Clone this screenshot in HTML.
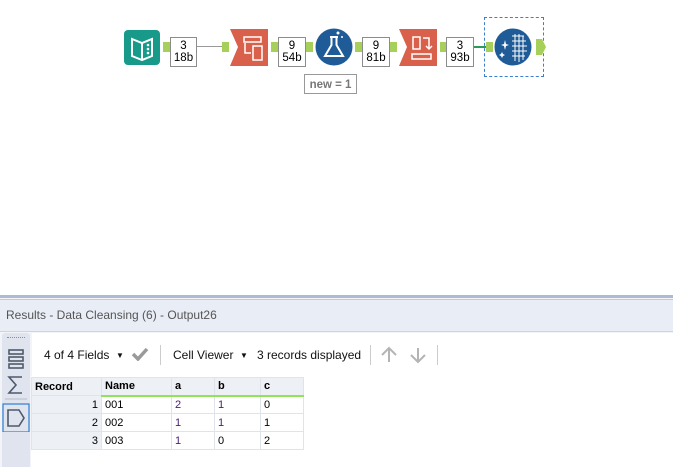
<!DOCTYPE html>
<html><head><style>
*{margin:0;padding:0;box-sizing:border-box}
body{width:673px;height:467px;overflow:hidden;background:#fff;font-family:"Liberation Sans",sans-serif;position:relative}
.a{position:absolute}
.box{position:absolute;background:#fff;border:1px solid #8c8c8c;font-size:11.5px;line-height:12px;text-align:center;color:#000;padding-top:2px}
.anc{position:absolute;width:7px;height:10px;background:#a6d05a}
.tb{position:absolute;font-size:12px;color:#111;top:348px}
table{border-collapse:collapse;font-size:11px}
td{border:1px solid #dfe3ea;height:18px;padding:0 3px}
td.p{color:#4a2070}
th{border:1px solid #dfe3ea;background:#edf0f5;height:18px;text-align:left;padding:0 3px;font-weight:bold}
th.g{border-bottom:2px solid #8fe35a}
td.r{background:#edf0f5;text-align:right}
</style></head><body>
<!-- workflow -->
<div class="a" style="left:124px;top:30px;width:36px;height:35px;background:#179a8a;border-radius:4px"></div>
<svg class="a" style="left:124px;top:30px" width="36" height="35"><path d="M8 9 L18 13 L28 9 L28 26 L18 30 L8 26Z M18 13 V30" fill="none" stroke="#fff" stroke-width="2"/><circle cx="24" cy="15" r="1.3" fill="#fff"/><circle cx="24" cy="19" r="1.3" fill="#fff"/><circle cx="24" cy="23" r="1.3" fill="#fff"/></svg>
<div class="anc" style="left:163px;top:42px"></div>
<div class="box" style="left:170px;top:37px;width:27px;height:30px">3<br>18b</div>
<div class="a" style="left:197px;top:46px;width:26px;height:1px;background:#999"></div>
<div class="anc" style="left:222px;top:42px"></div>
<svg class="a" style="left:230px;top:29px" width="40" height="37"><path d="M0 0H38V37H0L8 18Z" fill="#d9604a"/><rect x="14" y="8" width="17" height="5" fill="none" stroke="#fff" stroke-width="1.5"/><rect x="23" y="17" width="9" height="14" fill="none" stroke="#fff" stroke-width="1.5"/><path d="M15 14V24H21" fill="none" stroke="#fff" stroke-width="1.5"/></svg>
<div class="anc" style="left:271px;top:42px"></div>
<div class="box" style="left:278px;top:37px;width:28px;height:30px">9<br>54b</div>
<div class="anc" style="left:306px;top:42px"></div>
<svg class="a" style="left:315px;top:28px" width="38" height="38"><circle cx="19" cy="19" r="18.5" fill="#1e5b97"/><path d="M15 9H23M16.5 9V17L10 28H28L21.5 17V9" fill="none" stroke="#fff" stroke-width="2"/><circle cx="23" cy="5" r="1.5" fill="#fff"/><circle cx="27" cy="9" r="1" fill="#fff"/></svg>
<div class="box" style="left:304px;top:74px;width:53px;height:20px;color:#777;font-weight:bold;padding-top:4px;border-color:#999">new = 1</div>
<div class="anc" style="left:355px;top:42px"></div>
<div class="box" style="left:362px;top:37px;width:28px;height:30px">9<br>81b</div>
<div class="anc" style="left:390px;top:42px"></div>
<svg class="a" style="left:399px;top:29px" width="40" height="37"><path d="M0 0H38V37H0L8 18Z" fill="#d9604a"/><rect x="14" y="8" width="7" height="12" fill="none" stroke="#fff" stroke-width="1.5"/><rect x="13" y="25" width="19" height="5" fill="none" stroke="#fff" stroke-width="1.5"/><path d="M24 9H30V20M27 17L30 20L33 17" fill="none" stroke="#fff" stroke-width="1.5"/></svg>
<div class="anc" style="left:440px;top:42px"></div>
<div class="box" style="left:446px;top:37px;width:28px;height:30px">3<br>93b</div>
<div class="a" style="left:474px;top:46px;width:12px;height:2px;background:#2e9a5a"></div>
<div class="a" style="left:484px;top:17px;width:60px;height:60px;border:1px dashed #3a7fd0"></div>
<div class="anc" style="left:486px;top:42px"></div>
<svg class="a" style="left:494px;top:28px" width="40" height="38"><circle cx="19" cy="19" r="18.5" fill="#1e5b97"/><path d="M18 8H30M18 13H32M18 18H33M18 23H33M18 28H31M21 6V33M25 6V34M29 8V32" stroke="#fff" stroke-width="1"/><path d="M11 12L12 16L15 17L12 18L11 22L10 18L7 17L10 16Z" fill="#fff"/><path d="M8 24L9 26L11 27L9 28L8 30L7 28L5 27L7 26Z" fill="#fff"/></svg>
<svg class="a" style="left:536px;top:39px" width="10" height="16"><path d="M0 0H6L10 8L6 16H0Z" fill="#a6d05a"/></svg>
<!-- separator & panel -->
<div class="a" style="left:0;top:295px;width:673px;height:3px;background:#aeb9d6"></div>
<div class="a" style="left:0;top:298px;width:673px;height:1px;background:#f4f4f4"></div>
<div class="a" style="left:0;top:299px;width:673px;height:1px;background:#c8c8c8"></div>
<div class="a" style="left:0;top:300px;width:673px;height:31px;background:#e9edf6"></div>
<div class="a" style="left:6px;top:308px;font-size:12px;color:#555">Results - Data Cleansing (6) - Output26</div>
<div class="a" style="left:0;top:331px;width:673px;height:1px;background:#cfd3da"></div>
<div class="a" style="left:0;top:332px;width:673px;height:135px;background:#f3f4f7"></div>
<div class="a" style="left:2px;top:333px;width:28px;height:134px;background:#dfe4ef;border-radius:3px 3px 0 0"></div>
<div class="a" style="left:7px;top:337px;width:18px;height:1px;border-top:1px dotted #8a8f99"></div>
<svg class="a" style="left:2px;top:347px" width="28" height="85"><g fill="none" stroke="#4f5a6c" stroke-width="1.6"><rect x="7" y="3" width="14" height="4"/><rect x="7" y="10" width="14" height="4"/><rect x="7" y="17" width="14" height="4"/><path d="M20 30H7L14 38L7 46H20"/><path d="M6 63H17L22 71L17 79H6Z"/></g><path d="M3 52H25" stroke="#b7bdc9"/><rect x="1" y="57" width="26" height="28" fill="none" stroke="#2d7fd3" stroke-width="1.2"/></svg>
<div class="a" style="left:32px;top:333px;width:641px;height:43px;background:#fff"></div>
<div class="tb" style="left:44px">4 of 4 Fields</div>
<div class="tb" style="left:116px;font-size:8px;top:351px">▼</div>
<svg class="a" style="left:131px;top:347px" width="18" height="14"><path d="M2 7L7 12L16 2" fill="none" stroke="#9a9a9a" stroke-width="3.5"/></svg>
<div class="a" style="left:160px;top:345px;width:1px;height:20px;background:#ccc"></div>
<div class="tb" style="left:173px">Cell Viewer</div>
<div class="tb" style="left:240px;font-size:8px;top:351px">▼</div>
<div class="tb" style="left:257px">3 records displayed</div>
<div class="a" style="left:370px;top:345px;width:1px;height:20px;background:#ccc"></div>
<svg class="a" style="left:380px;top:346px" width="50" height="18"><path d="M9 16V2M2 9L9 2L16 9M38 2V16M31 9L38 16L45 9" fill="none" stroke="#b4b4b4" stroke-width="2"/></svg>
<div class="a" style="left:437px;top:345px;width:1px;height:20px;background:#ccc"></div>
<div class="a" style="left:31px;top:376px;width:642px;height:91px;background:#fff"></div>
<table class="a" style="left:31px;top:377px">
<tr><th style="width:70px">Record</th><th class="g" style="width:70px">Name</th><th class="g" style="width:43px">a</th><th class="g" style="width:46px">b</th><th class="g" style="width:43px">c</th></tr>
<tr><td class="r">1</td><td>001</td><td class="p">2</td><td class="p">1</td><td>0</td></tr>
<tr><td class="r">2</td><td>002</td><td class="p">1</td><td class="p">1</td><td>1</td></tr>
<tr><td class="r">3</td><td>003</td><td class="p">1</td><td>0</td><td>2</td></tr>
</table>
</body></html>
